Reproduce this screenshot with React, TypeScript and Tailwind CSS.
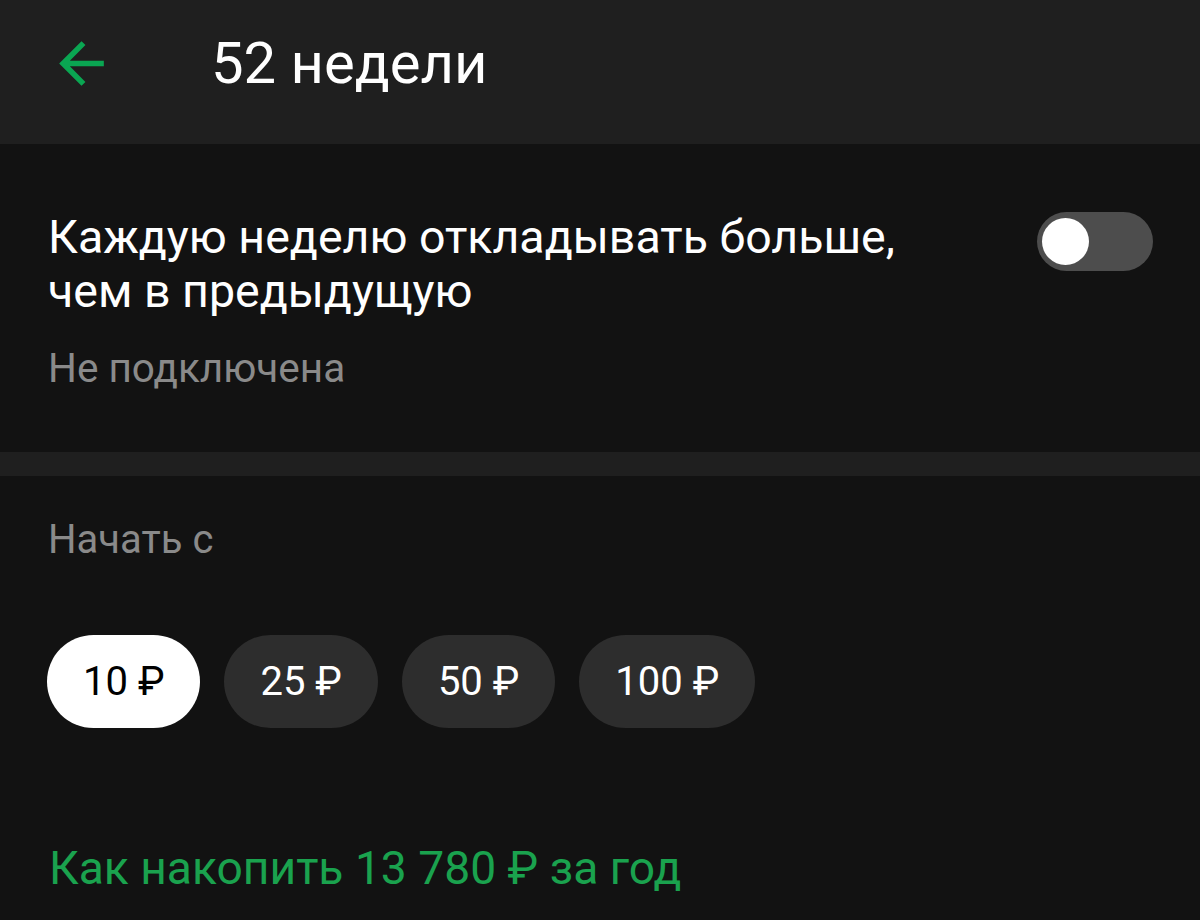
import * as React from "react";

const amounts = [10, 25, 50, 100];

function BackArrow() {
  return (
    <svg width="67" height="67" viewBox="0 0 24 24" fill="#0aa652">
      <path d="M20 11H7.83l5.59-5.59L12 4l-8 8 8 8 1.41-1.41L7.83 13H20v-2z" />
    </svg>
  );
}

function Toggle({ on }: { on: boolean }) {
  return (
    <div className="relative h-[59px] w-[116px] shrink-0 rounded-full bg-[#4d4d4d]">
      <div
        className={
          on
            ? "absolute right-[5px] top-[6px] h-[47px] w-[47px] rounded-full bg-white"
            : "absolute left-[5px] top-[6px] h-[47px] w-[47px] rounded-full bg-white"
        }
      />
    </div>
  );
}

export default function App() {
  const [selected, setSelected] = React.useState(10);
  const [grow, setGrow] = React.useState(false);

  return (
    <div className="h-[920px] w-[1200px] overflow-hidden bg-[#121212] font-['Roboto',sans-serif] text-white">
      <header className="flex h-[144px] items-center bg-[#1f1f1f] pb-[18px]">
        <button className="ml-[48px]">
          <BackArrow />
        </button>
        <h1 className="ml-[96px] text-[58px] leading-[68px] font-normal">52 недели</h1>
      </header>

      <section className="flex justify-between pl-[48px] pr-[47px] pt-[66px] pb-[60px]">
        <div>
          <div className="text-[46.5px] leading-[54px]">
            Каждую неделю откладывать больше,
            <br />
            чем в предыдущую
          </div>
          <div className="mt-[27px] text-[40.5px] leading-[47px] text-[#8a8a8a]">Не подключена</div>
        </div>
        <div className="pt-[2px]" onClick={() => setGrow(!grow)}>
          <Toggle on={grow} />
        </div>
      </section>

      <div className="h-[24px] bg-[#1f1f1f]" />

      <section className="px-[47px] pt-[40px]">
        <div className="pl-px text-[40px] leading-[47px] text-[#8a8a8a]">Начать с</div>
        <div className="mt-[72px] flex gap-[24px]">
          {amounts.map((a) => (
            <button
              key={a}
              onClick={() => setSelected(a)}
              className={
                a === selected
                  ? "flex h-[93px] items-center rounded-full bg-white px-[36px] text-[40px] text-black"
                  : "flex h-[93px] items-center rounded-full bg-[#2d2d2d] px-[36px] text-[40px] text-white"
              }
            >
              {a} ₽
            </button>
          ))}
        </div>
        <div className="mt-[113px] pl-[2px] text-[46.2px] leading-[54px] text-[#1aa24e]">Как накопить 13 780 ₽ за год</div>
      </section>
    </div>
  );
}
